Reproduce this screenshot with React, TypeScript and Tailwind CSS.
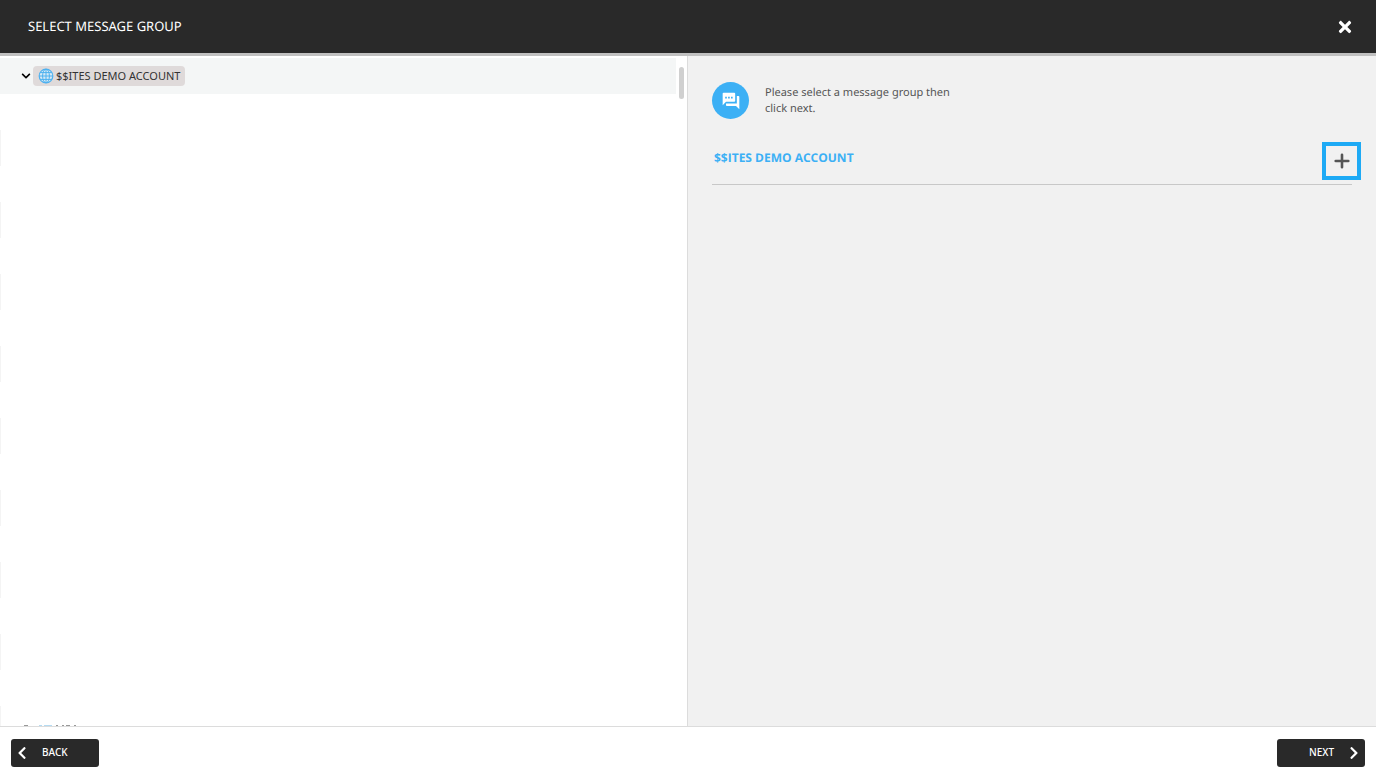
import { FaChevronDown, FaChevronLeft, FaChevronRight, FaTimes } from "react-icons/fa";

const emptyRows = Array.from({ length: 17 }, (_, i) => i + 1);

function GlobeIcon(): JSX.Element {
  return (
    <svg viewBox="0 0 16 16" className="size-4 shrink-0" fill="none" stroke="#4db1f0" aria-hidden="true">
      <circle cx="8" cy="8" r="6.8" fill="#d5e9f5" strokeWidth="1.2" />
      <ellipse cx="8" cy="8" rx="3.4" ry="6.8" />
      <path d="M8 1v14M1 8h14M2.4 4.6h11.2M2.4 11.4h11.2" />
    </svg>
  );
}

function ChatIcon(): JSX.Element {
  return (
    <svg viewBox="0 0 24 24" className="size-5" fill="#fff" aria-hidden="true">
      <path d="M21 6h-2v9H6v2c0 .55.45 1 1 1h11l4 4V7c0-.55-.45-1-1-1z" />
      <path d="M17 12V3c0-.55-.45-1-1-1H3c-.55 0-1 .45-1 1v14l4-4h10c.55 0 1-.45 1-1z" />
      <path d="M5 7h2v2H5zM8.5 7h2v2h-2zM12 7h2v2h-2z" fill="#3cb0f5" />
    </svg>
  );
}

function PlusIcon(): JSX.Element {
  return (
    <svg viewBox="0 0 16 16" className="size-4" fill="none" stroke="#555" strokeWidth="2.6" strokeLinecap="round" aria-hidden="true">
      <path d="M8 1.7v12.6M1.7 8h12.6" />
    </svg>
  );
}

// top edge of the next item, cut off by the footer
function ItemEdge(): JSX.Element {
  return (
    <svg viewBox="0 0 56 2" className="h-0.5 w-14" fill="#999" aria-hidden="true">
      <path d="M3 1h4v1H3zM35 1h2v1h-2zM41 1h2v1h-2zM45 1h4v1h-4zM53 1h2v1h-2z" />
      <path d="M18 1h3v1h-3zM23 1h8v1h-8z" fill="#b5dbf2" />
    </svg>
  );
}

export default function App(): JSX.Element {
  return (
    <div className="flex h-screen flex-col bg-white font-['Noto_Sans','Open_Sans',sans-serif] text-[#333] [text-rendering:geometricPrecision]">
      <header className="flex h-14 shrink-0 items-center justify-between border-b-3 border-[#c0c0c0] bg-[#292929] pr-[22px] pl-7 text-white">
        <h1 className="text-[13px]">SELECT MESSAGE GROUP</h1>
        <button type="button" aria-label="Close">
          <FaTimes className="size-[18px]" />
        </button>
      </header>

      <main className="flex min-h-0 flex-1">
        <section className="flex w-1/2 overflow-hidden border-r border-[#dcdcdc] pt-0.5">
          <ul className="flex-1 text-[11px]">
            <li className="flex h-9 items-center bg-[#f4f6f6] pl-5">
              <button type="button" aria-label="Collapse" className="flex w-3 justify-center text-black">
                <FaChevronDown className="size-[10px]" />
              </button>
              <button type="button" className="ml-px flex h-5 items-center gap-0.5 rounded-sm bg-[#dfdada] px-[5px]">
                <GlobeIcon />
                $$ITES DEMO ACCOUNT
              </button>
            </li>
            {emptyRows.map((row) => (
              <li key={row} className="h-9 w-px even:bg-white odd:bg-[#f4f4f4]" />
            ))}
            <li className="flex h-5 items-end border-l border-[#f4f4f4] pl-5">
              <ItemEdge />
            </li>
          </ul>
          <div className="flex w-[11px] justify-center pt-[9px]">
            <div className="h-8 w-[5px] rounded-full bg-[#d0d0d0]" />
          </div>
        </section>

        <section className="w-1/2 bg-[#f1f1f1] px-6 pt-[26px]">
          <div className="flex items-center gap-4">
            <div className="flex size-[37px] items-center justify-center rounded-full bg-[#3cb0f5]">
              <ChatIcon />
            </div>
            <p className="w-[200px] text-[11px] leading-4 text-[#555]">
              Please select a message group then click next.
            </p>
          </div>
          <div className="mt-5 flex h-[46px] items-start justify-between border-b border-[#c8c8c8] pt-[3px]">
            <h2 className="pt-1 pl-0.5 font-['Open_Sans',sans-serif] text-xs leading-6 font-bold text-[#3cb0f5]">
              $$ITES DEMO ACCOUNT
            </h2>
            <button
              type="button"
              aria-label="Add message group"
              className="-mr-[9px] flex h-[38px] w-[39px] items-center justify-center border-4 border-[#1eaaf5]"
            >
              <PlusIcon />
            </button>
          </div>
        </section>
      </main>

      <footer className="flex h-[50px] shrink-0 items-center justify-between border-t border-[#dcdcdc] px-[11px] pt-0.5">
        <button type="button" className="flex h-7 w-[88px] items-center gap-[13px] rounded-[3px] bg-[#292929] pl-1 text-[10px] font-medium text-white">
          <FaChevronLeft className="size-[14px]" />
          BACK
        </button>
        <button type="button" className="flex h-7 w-[88px] items-center justify-end gap-[13px] rounded-[3px] bg-[#292929] pr-1 text-[10px] font-medium text-white">
          NEXT
          <FaChevronRight className="size-[14px]" />
        </button>
      </footer>
    </div>
  );
}
